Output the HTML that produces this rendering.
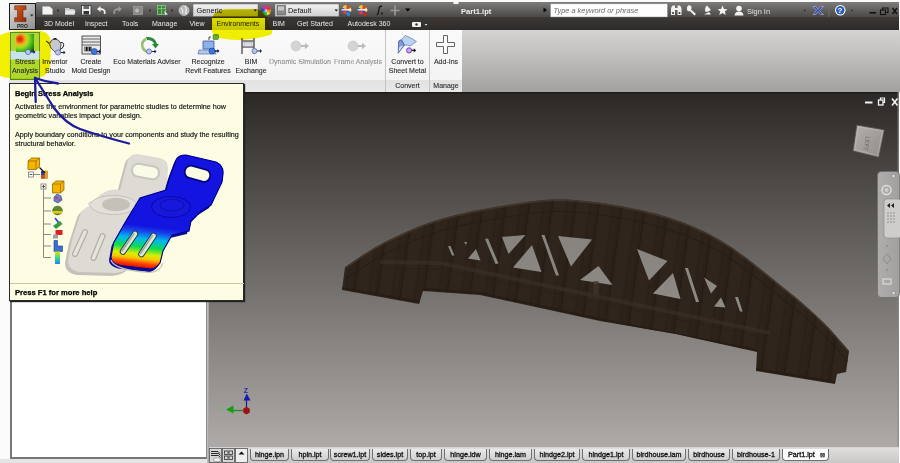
<!DOCTYPE html>
<html><head><meta charset="utf-8">
<style>
*{box-sizing:border-box}
html,body{margin:0;padding:0}
body{width:900px;height:463px;overflow:hidden;position:relative;background:#fbfbfb;font-family:"Liberation Sans",sans-serif}
.a{position:absolute}
.qa{left:36px;top:2px;width:863px;height:16px;background:linear-gradient(#7e7c7a,#62605e 50%,#484644)}
.tabs{left:36px;top:17px;width:863px;height:13px;background:linear-gradient(#3a3735,#2e2b29)}
.tab{position:absolute;top:19px;font-size:7px;color:#e8e8e8;white-space:nowrap;line-height:10px}
.rib{left:9px;top:30px;width:453px;height:62px;background:linear-gradient(#fafafa,#f2f2f2)}
.ribr{left:462px;top:30px;width:438px;height:62px;background:linear-gradient(#d6d4d2,#a3a19f)}
.lbl{position:absolute;font-size:7px;color:#2a2a2a;-webkit-text-stroke:0.1px #2a2a2a;text-align:center;white-space:nowrap;line-height:8.5px}
.vp{left:209px;top:92px;width:690px;height:355px;background:linear-gradient(#2c2826,#3c3836 12%,#adaaa7)}
.br{left:10px;top:100px;width:197px;height:359px;background:#fff;border-left:2px solid #777;border-bottom:2px solid #777;border-right:1px solid #8a8a8a}
.tt{left:9px;top:83px;width:235px;height:218px;background:#fdfde3;border:1px solid #2a2a2a;box-shadow:1px 1px 1px #222}
.ttx{position:absolute;left:5px;font-size:7.2px;color:#111;white-space:nowrap;line-height:9px;-webkit-text-stroke:0.15px #111}
.btab{position:absolute;top:449px;height:12px;background:linear-gradient(#eaeaea,#cfcfcf);border:1px solid #707070;border-top:none;border-radius:0 0 4px 4px;font-size:7.2px;color:#111;text-align:center;line-height:11px;white-space:nowrap;-webkit-text-stroke:0.3px #111}
</style></head><body>
<!-- title/quick access -->
<div class="a qa"></div>
<div class="a tabs"></div>
<!-- app button -->

<div class="tab" style="left:44px">3D Model</div>
<div class="tab" style="left:85px">Inspect</div>
<div class="tab" style="left:122px">Tools</div>
<div class="tab" style="left:152px">Manage</div>
<div class="tab" style="left:189.5px">View</div>
<div class="a" style="left:212px;top:18px;width:53px;height:12px;background:linear-gradient(#e6e6e6,#cfcfcf)"></div>
<div class="tab" style="left:216.5px;color:#222">Environments</div>
<div class="tab" style="left:272.5px">BIM</div>
<div class="tab" style="left:297px">Get Started</div>
<div class="tab" style="left:347.5px">Autodesk 360</div>

<!--TOPBAR-->
<svg class="a" style="left:0;top:0" width="900" height="32" viewBox="0 0 900 32">
<defs>
 <linearGradient id="appg" x1="0" y1="0" x2="1" y2="1"><stop offset="0" stop-color="#e0e0e0"/><stop offset="1" stop-color="#8c8c8c"/></linearGradient><linearGradient id="ig" x1="0" y1="0" x2="1" y2="1"><stop offset="0" stop-color="#e06020"/><stop offset="1" stop-color="#902808"/></linearGradient>
 <linearGradient id="fld" x1="0" y1="0" x2="0" y2="1"><stop offset="0" stop-color="#f4f4f4"/><stop offset="1" stop-color="#cfcfcf"/></linearGradient>
 <radialGradient id="wheel" cx="0.5" cy="0.5" r="0.5"><stop offset="0" stop-color="#fff"/><stop offset="0.6" stop-color="#f0d040"/><stop offset="1" stop-color="#c03020"/></radialGradient>
</defs>
<!-- app button -->
<rect x="9.5" y="3.5" width="26" height="26" fill="url(#appg)" stroke="#1a1a1a" stroke-width="1"/>
<path d="M14.7,5.8 H26 V9.6 H23 V17.8 H26 V21.6 H14.7 V17.8 H17.6 V9.6 H14.7Z" fill="url(#ig)" stroke="#6a2006" stroke-width="0.6"/>
<text x="17" y="28.3" font-family="Liberation Sans" font-weight="bold" font-size="5" fill="#222">PRO</text>
<path d="M30,14.5 H33.5 L31.75,16.5Z" fill="#222"/>
<!-- quick access icons -->
<path d="M42.5,6.5 H49.5 L52.5,9 V14.5 H42.5Z" fill="#f2f2f2" stroke="#bbb" stroke-width="0.5"/>
<circle cx="58" cy="10.5" r="0.9" fill="#222"/>
<path d="M65,8 H69 L70,9 H74.5 V14.5 H65Z" fill="#c8c8c8"/><path d="M66,10.5 H75.5 L74.5,14.5 H65Z" fill="#e8e8e8"/>
<rect x="81.5" y="5.5" width="9.5" height="9.5" fill="#eee" stroke="#333" stroke-width="0.8"/><rect x="83.5" y="6" width="5.5" height="3" fill="#666"/><rect x="83.5" y="11" width="5.5" height="3.5" fill="#333"/>
<path d="M104.5,14 Q106,9 100,9 H98.5" fill="none" stroke="#eee" stroke-width="1.8"/><path d="M97,9 L100.5,6 V12Z" fill="#eee"/>
<path d="M114.5,14 Q113,9 119,9 H120.5" fill="none" stroke="#9a9896" stroke-width="1.8"/><path d="M122,9 L118.5,6 V12Z" fill="#9a9896"/>
<rect x="133.5" y="6.5" width="9" height="8" fill="#8a8886" stroke="#aaa" stroke-width="0.6"/><circle cx="137" cy="10.5" r="2" fill="#bbb"/>
<circle cx="150" cy="10.5" r="0.9" fill="#222"/>
<rect x="157.5" y="5.5" width="8" height="9" fill="#3a8a3a" stroke="#9ad09a" stroke-width="0.7"/><path d="M157.5,8.5 H165.5 M161.5,5.5 V14.5" stroke="#a0d8a0" stroke-width="0.6"/><path d="M164,11 L168,14.5 L165,14.5 L166,16Z" fill="#fff"/>
<circle cx="172" cy="10.5" r="0.9" fill="#222"/>
<circle cx="184" cy="10.5" r="5" fill="#b8b8b8" stroke="#ddd" stroke-width="0.6"/><path d="M181,8 Q184,10 182.5,13 M185,6 Q187,9 186,12 Q184,13 187,14" fill="none" stroke="#fafafa" stroke-width="1"/>
<!-- generic field -->
<rect x="193" y="4" width="65" height="12.5" fill="url(#fld)" stroke="#666" stroke-width="0.5"/>
<text x="196.5" y="13.3" font-family="Liberation Sans" font-size="7.4" fill="#111">Generic</text>
<path d="M253.5,9.5 H257 L255.25,11.5Z" fill="#111"/>
<path d="M266,10.5 L268.50,6.17 A5,5 0 0,1 270.83,9.21Z" fill="#e83030"/><path d="M266,10.5 L270.83,9.21 A5,5 0 0,1 270.33,13.00Z" fill="#f08020"/><path d="M266,10.5 L270.33,13.00 A5,5 0 0,1 267.29,15.33Z" fill="#f0e020"/><path d="M266,10.5 L267.29,15.33 A5,5 0 0,1 263.50,14.83Z" fill="#40c040"/><path d="M266,10.5 L263.50,14.83 A5,5 0 0,1 261.17,11.79Z" fill="#20a0e0"/><path d="M266,10.5 L261.17,11.79 A5,5 0 0,1 261.67,8.00Z" fill="#3040c0"/><path d="M266,10.5 L261.67,8.00 A5,5 0 0,1 264.71,5.67Z" fill="#a040c0"/><path d="M266,10.5 L264.71,5.67 A5,5 0 0,1 268.50,6.17Z" fill="#e03080"/><circle cx="266" cy="10.5" r="1.6" fill="#fff" opacity="0.5"/>
<rect x="275" y="4" width="64" height="12.5" fill="url(#fld)" stroke="#666" stroke-width="0.5"/>
<rect x="277" y="5.5" width="8.5" height="9.5" fill="#8a8a8a" stroke="#444" stroke-width="0.5"/><rect x="278" y="6.5" width="6" height="4" fill="#c8c8c8"/>
<text x="288" y="13.3" font-family="Liberation Sans" font-size="7.4" fill="#111">Default</text>
<path d="M334.5,9.5 H338 L336.25,11.5Z" fill="#111"/>
<path d="M346.5,9.8 L346.50,5.00 A4.8,4.8 0 0,1 350.66,7.40Z" fill="#e04040"/><path d="M346.5,9.8 L350.66,7.40 A4.8,4.8 0 0,1 350.66,12.20Z" fill="#f0d030"/><path d="M346.5,9.8 L350.66,12.20 A4.8,4.8 0 0,1 346.50,14.60Z" fill="#3050d0"/><path d="M346.5,9.8 L346.50,14.60 A4.8,4.8 0 0,1 342.34,12.20Z" fill="#e04040"/><path d="M346.5,9.8 L342.34,12.20 A4.8,4.8 0 0,1 342.34,7.40Z" fill="#3050d0"/><path d="M346.5,9.8 L342.34,7.40 A4.8,4.8 0 0,1 346.50,5.00Z" fill="#f0d030"/><rect x="341.7" y="9" width="9.6" height="1.6" fill="#f4f4f4" opacity="0.85"/><path d="M348,11.5 Q350,13 350,14.5 A1.6,1.6 0 0,1 346.8,14.5 Q346.8,13 348,11.5Z" fill="#2a90e0"/>
<path d="M362.5,9.8 L362.50,5.00 A4.8,4.8 0 0,1 366.66,7.40Z" fill="#e04040"/><path d="M362.5,9.8 L366.66,7.40 A4.8,4.8 0 0,1 366.66,12.20Z" fill="#f0d030"/><path d="M362.5,9.8 L366.66,12.20 A4.8,4.8 0 0,1 362.50,14.60Z" fill="#3050d0"/><path d="M362.5,9.8 L362.50,14.60 A4.8,4.8 0 0,1 358.34,12.20Z" fill="#e04040"/><path d="M362.5,9.8 L358.34,12.20 A4.8,4.8 0 0,1 358.34,7.40Z" fill="#3050d0"/><path d="M362.5,9.8 L358.34,7.40 A4.8,4.8 0 0,1 362.50,5.00Z" fill="#f0d030"/><rect x="357.7" y="9" width="9.6" height="1.6" fill="#f4f4f4" opacity="0.85"/><path d="M364.5,11.5 Q366.5,13 366.5,14.5 A1.6,1.6 0 0,1 363.3,14.5 Q363.3,13 364.5,11.5Z" fill="#e02010"/>
<path d="M377,15 Q379,13 379,9 Q379,6 382,6" fill="none" stroke="#1a1a1a" stroke-width="1.3"/><circle cx="382" cy="13.5" r="1" fill="#1a1a1a"/>
<path d="M395,5.5 V15.5 M390.5,10.5 H399.5" stroke="#9c9a98" stroke-width="1.6"/>
<path d="M405,8.5 H410.5 L407.75,11.5Z" fill="#000"/>
<rect x="453.5" y="0" width="5" height="4" fill="#f8f8f8"/>
<text x="461" y="13.5" font-family="Liberation Sans" font-weight="bold" font-size="7.6" fill="#f0f0f0">Part1.ipt</text>
<path d="M543.5,7.5 L547,10 L543.5,12.5Z" fill="#000"/>
<rect x="550.5" y="3.8" width="117" height="13.2" fill="#fdfdfd" stroke="#888" stroke-width="0.5"/>
<text x="553.5" y="13.3" font-family="Liberation Sans" font-style="italic" font-size="7.4" fill="#6a6a6a">Type a keyword or phrase</text>
<!-- right icons -->
<g fill="#f2f2f2">
 <path d="M671,15 V9 Q671,6 673,5.5 L675,5.5 V15Z M681.5,15 V9 Q681.5,6 679.5,5.5 L677.5,5.5 V15Z"/><rect x="674" y="8" width="4.5" height="2"/>
 <path d="M687,7 L689,5 Q693,6 691,9.5 L696,14 L694.5,15.5 L690,11 Q686.5,12.5 687,7Z"/>
 <path d="M704,14.5 H711 L709,12 Z M705.5,12 Q704,8 707,5.5 L711,10 Q708,12 705.5,12Z"/>
 <path d="M722.5,5.5 L724,9 L727.5,9.2 L724.8,11.5 L725.8,15 L722.5,13 L719.2,15 L720.2,11.5 L717.5,9.2 L721,9Z"/>
 <circle cx="739" cy="8.5" r="2.8"/><circle cx="673" cy="13" r="1.1" fill="#3a3836"/><circle cx="679.5" cy="13" r="1.1" fill="#3a3836"/><path d="M734.5,15.5 Q735,11.5 739,11.5 Q743,11.5 743.5,15.5Z"/>
</g>
<text x="747" y="13.5" font-family="Liberation Sans" font-size="7.4" fill="#e0e0e0">Sign In</text>
<circle cx="804.7" cy="10.5" r="0.8" fill="#222"/>
<path d="M813,6.5 L816,6.5 L818,9.5 L820.5,6.5 L823.5,6.5 L819.5,10.5 L823.5,14.5 L820.5,14.5 L818,11.5 L816,14.5 L813,14.5 L816.5,10.5Z" fill="#3a4ab0" stroke="#c8d0f0" stroke-width="0.5"/>
<rect x="828.5" y="4" width="1" height="13" fill="#6e6c6a"/>
<circle cx="840.3" cy="10.3" r="5.3" fill="#fff"/><circle cx="840.3" cy="10.3" r="4.2" fill="#2e5fb8"/>
<text x="837.6" y="13.4" font-family="Liberation Sans" font-weight="bold" font-size="8" fill="#fff">?</text>
<circle cx="852" cy="10.5" r="0.8" fill="#222"/>
<rect x="869.5" y="12" width="6.5" height="1.6" fill="#111"/>
<rect x="880.5" y="10" width="5" height="4.5" fill="none" stroke="#111" stroke-width="1.1"/><path d="M882.5,10 V8 H888 V12.5 H885.5" fill="none" stroke="#111" stroke-width="1.1"/>
<path d="M892.5,8 L897,14 M897,8 L892.5,14" stroke="#111" stroke-width="1.4"/>
<!-- tab bar camera -->
<rect x="412" y="22" width="9" height="5" rx="1" fill="#eee"/><circle cx="416.5" cy="24.5" r="1.2" fill="#333"/>
<path d="M424.5,24 H427.5 L426,25.8Z" fill="#ddd"/>
</svg>
<!--/TOPBAR-->

<!-- ribbon -->
<div class="a rib"></div>
<div class="a ribr"></div>
<div class="a" style="left:9px;top:80px;width:453px;height:12px;background:linear-gradient(#e2e2e2,#e8e8e8)"></div>
<div class="a" style="left:385px;top:30px;width:1px;height:62px;background:#c4c4c4"></div>
<div class="a" style="left:429px;top:30px;width:1px;height:62px;background:#c4c4c4"></div>
<div class="lbl" style="left:386px;top:82px;width:43px">Convert</div>
<div class="lbl" style="left:430px;top:82px;width:32px">Manage</div>

<div class="a" style="left:10px;top:32px;width:29.5px;height:47.5px;background:#b0d82c;border:1px solid #5a8a30"></div>
<!--RIBICONS-->
<svg class="a" style="left:0;top:0" width="470" height="60" viewBox="0 0 470 60">
<defs>
 <radialGradient id="heat" cx="0.22" cy="0.28" r="1"><stop offset="0" stop-color="#d81808"/><stop offset="0.14" stop-color="#f04810"/><stop offset="0.3" stop-color="#f0b020"/><stop offset="0.45" stop-color="#b0dc20"/><stop offset="0.65" stop-color="#50c020"/><stop offset="0.85" stop-color="#208a18"/><stop offset="1" stop-color="#105010"/></radialGradient>
 <g id="arr"><circle cx="0" cy="0" r="2.6" fill="#b8c4e8" stroke="#5060a0" stroke-width="0.7"/><path d="M2.6,-0.6 H5.5 V-2 L7.5,0 L5.5,2 V0.6 H2.6Z" fill="#1a2050"/></g>
</defs>
<!-- stress -->
<rect x="10.5" y="51" width="29" height="8.5" fill="#c8e2f0"/>
<path d="M19,34 H34 V52 H16 V37Z" fill="url(#heat)"/>
<use href="#arr" x="28" y="52"/>
<!-- inventor studio teapot -->
<path d="M46,41 Q50,44 51,48 L55,52 H60 L61,44 Q59,39 55,39 Q51,39 50,43Z" fill="#c8c8d4" stroke="#333" stroke-width="0.8"/>
<path d="M60.5,42.5 Q64.5,42 63.5,46 Q62.5,49 60.5,49" fill="none" stroke="#222" stroke-width="1"/>
<rect x="53.5" y="38" width="3" height="1.6" fill="#222"/>
<use href="#arr" x="58" y="52.5"/>
<!-- mold -->
<rect x="82" y="36" width="18.5" height="18" fill="#e8e8e8" stroke="#444" stroke-width="0.9"/>
<path d="M82,39 H100.5 M82,42 H100.5 M82,45 H100.5" stroke="#555" stroke-width="0.9"/>
<rect x="84" y="46.5" width="8" height="5" fill="#888"/><rect x="86" y="47" width="1.5" height="4" fill="#111"/><rect x="89" y="47" width="1.5" height="4" fill="#111"/>
<circle cx="94.2" cy="51.5" r="3" fill="#3a78e0" stroke="#1a3a90" stroke-width="0.6"/><path d="M97,50.8 H99 V49.5 L101,51.5 L99,53.5 V52.2 H97Z" fill="#1a2050"/>
<!-- eco -->
<path d="M146,37 Q155,36 157,44 L159,44 L155.5,48.5 L152,44 L154,44 Q153,40 147,40Z" fill="#2a8a3a"/>
<path d="M141,46 Q140,40 146,37.5 L146.5,40.5 Q143,42 143.5,46 Q145,50 149,51 L149,53.5 Q142,53 141,46Z" fill="#98c070"/>
<use href="#arr" x="149" y="51.5"/>
<!-- revit -->
<rect x="213" y="34.5" width="5.5" height="5" rx="1" fill="#60b030" stroke="#2a6a10" stroke-width="0.5"/>
<path d="M211,37 H209 V40" fill="none" stroke="#222" stroke-width="0.8"/>
<path d="M203,41 H214 L214,49 H203Z" fill="#90b0e8" stroke="#3a5aa0" stroke-width="0.8"/>
<path d="M199,50 H215 L216,54 H198Z" fill="#b8c8e8" stroke="#3a5aa0" stroke-width="0.6"/>
<circle cx="212" cy="51" r="3" fill="#3a78e0" stroke="#1a3a90" stroke-width="0.6"/><path d="M215,50.3 H217.5 V49 L219.5,51 L217.5,53 V51.7 H215Z" fill="#1a2050"/>
<!-- BIM -->
<path d="M242,38 V54 M254,38 V54 M242,41 H254 M242,47 H254" stroke="#666" stroke-width="1.6" fill="none"/>
<rect x="244" y="42" width="8" height="4.5" fill="#dde" stroke="#888" stroke-width="0.5"/>
<use href="#arr" x="254.5" y="51"/>
<!-- disabled -->
<circle cx="296" cy="46" r="5" fill="#d4d4d4" stroke="#c4c4c4" stroke-width="0.6"/><path d="M301,45 H305 V42.8 L309,46 L305,49.2 V47 H301Z" fill="#bcbcbc"/>
<circle cx="353" cy="46" r="5" fill="#d4d4d4" stroke="#c4c4c4" stroke-width="0.6"/><path d="M358,45 H362 V42.8 L366,46 L362,49.2 V47 H358Z" fill="#bcbcbc"/>
<!-- convert sheet metal -->
<path d="M401.3,39.8 L405.2,35.4 Q410,37 416.4,41.6 L410.1,46 Q407,44.5 404.4,45.2Z" fill="#bcd2f2" stroke="#5a78b8" stroke-width="0.7"/>
<path d="M398.7,41 L401.3,39.8 L404.4,45.2 L398.2,53.2Z" fill="#7e9cdc" stroke="#3a4a80" stroke-width="0.7"/>
<path d="M399.5,47 L403,45.5 L398.5,52Z" fill="#dfe8f8"/>
<circle cx="409.1" cy="50.4" r="2.6" fill="#c8a8f0" stroke="#6a3aa0" stroke-width="0.9"/><path d="M411.7,49.7 H413.8 V48.2 L416.2,50.4 L413.8,52.6 V51.1 H411.7Z" fill="#1a1030"/>
<!-- add-ins -->
<path d="M443.5,35.5 H447.5 V42.5 H454.5 V46.5 H447.5 V53.5 H443.5 V46.5 H436.5 V42.5 H443.5Z" fill="#fafafa" stroke="#555" stroke-width="0.9"/>
</svg>
<!--/RIBICONS-->

<div class="lbl" style="left:5px;top:58px;width:40px">Stress<br>Analysis</div>
<div class="lbl" style="left:35px;top:58px;width:40px">Inventor<br>Studio</div>
<div class="lbl" style="left:66px;top:58px;width:50px">Create<br>Mold Design</div>
<div class="lbl" style="left:112px;top:58px;width:70px">Eco Materials Adviser</div>
<div class="lbl" style="left:180px;top:58px;width:56px">Recognize<br>Revit Features</div>
<div class="lbl" style="left:231px;top:58px;width:40px">BIM<br>Exchange</div>
<div class="lbl" style="left:268px;top:58px;width:64px;color:#b4b4b4">Dynamic Simulation</div>
<div class="lbl" style="left:332px;top:58px;width:52px;color:#b4b4b4">Frame Analysis</div>
<div class="lbl" style="left:386px;top:58px;width:43px">Convert to<br>Sheet Metal</div>
<div class="lbl" style="left:430px;top:58px;width:32px">Add-Ins</div>

<!-- viewport -->
<div class="a vp"></div>
<!--BRIDGE-->
<svg class="a" style="left:0;top:0" width="900" height="463" viewBox="0 0 900 463">
<defs>
 <linearGradient id="vpg" gradientUnits="userSpaceOnUse" x1="0" y1="92" x2="0" y2="447">
  <stop offset="0" stop-color="#2c2826"/><stop offset="0.12" stop-color="#3c3836"/><stop offset="1" stop-color="#adaaa7"/>
 </linearGradient>
 <linearGradient id="holeg" gradientUnits="userSpaceOnUse" x1="0" y1="230" x2="0" y2="315">
  <stop offset="0" stop-color="#86827e"/><stop offset="1" stop-color="#8f8b87"/>
 </linearGradient>
 <pattern id="planks" patternUnits="userSpaceOnUse" width="23" height="400" patternTransform="rotate(8)">
  <rect width="30" height="400" fill="#2d231a"/>
  <rect x="0" width="1" height="400" fill="#221a13"/>
  <rect x="3" width="10" height="400" fill="#30251c"/>
  <rect x="15" width="0.8" height="400" fill="#261d15"/>
  <rect x="20" width="8" height="400" fill="#2b2118"/>
 </pattern>
</defs>
<path d="M345.0,267.0 350.0,263.7 356.9,258.9 365.2,253.4 374.4,247.8 384.0,242.5 394.1,237.5 404.9,232.5 416.4,227.5 428.8,222.7 442.0,218.5 456.7,214.7 472.9,211.1 489.5,207.9 505.6,205.2 520.0,203.0 532.1,201.3 542.5,200.1 552.3,199.4 562.8,199.3 575.0,200.0 589.6,201.4 605.9,203.6 622.9,206.4 639.6,209.7 655.0,213.5 669.0,217.6 682.1,222.1 694.8,227.2 707.3,233.1 720.0,240.0 733.3,248.4 746.9,258.3 760.2,268.8 772.8,279.0 784.0,288.0 793.6,295.8 802.0,302.8 809.5,309.4 816.4,315.7 823.0,322.0 829.4,328.6 835.6,335.4 841.1,341.7 845.7,347.1 849.0,351.0 846.0,372.0 837.0,374.0 835.0,384.0 756.0,371.0 757.0,352.0 676.0,334.0 600.0,321.0 480.0,295.0 423.0,291.0 419.0,304.0 342.0,290.0Z" fill="url(#planks)"/>
<clipPath id="bclip"><path d="M345.0,267.0 350.0,263.7 356.9,258.9 365.2,253.4 374.4,247.8 384.0,242.5 394.1,237.5 404.9,232.5 416.4,227.5 428.8,222.7 442.0,218.5 456.7,214.7 472.9,211.1 489.5,207.9 505.6,205.2 520.0,203.0 532.1,201.3 542.5,200.1 552.3,199.4 562.8,199.3 575.0,200.0 589.6,201.4 605.9,203.6 622.9,206.4 639.6,209.7 655.0,213.5 669.0,217.6 682.1,222.1 694.8,227.2 707.3,233.1 720.0,240.0 733.3,248.4 746.9,258.3 760.2,268.8 772.8,279.0 784.0,288.0 793.6,295.8 802.0,302.8 809.5,309.4 816.4,315.7 823.0,322.0 829.4,328.6 835.6,335.4 841.1,341.7 845.7,347.1 849.0,351.0 846.0,372.0 837.0,374.0 835.0,384.0 756.0,371.0 757.0,352.0 676.0,334.0 600.0,321.0 480.0,295.0 423.0,291.0 419.0,304.0 342.0,290.0Z"/></clipPath>
<g clip-path="url(#bclip)">
<path d="M345.0,267.5 350.0,264.2 356.9,259.4 365.2,253.9 374.4,248.3 384.0,243.0 394.1,238.0 404.9,233.0 416.4,228.0 428.8,223.2 442.0,219.0 456.7,215.2 472.9,211.6 489.5,208.4 505.6,205.7 520.0,203.5 532.1,201.8 542.5,200.6 552.3,199.9 562.8,199.8 575.0,200.5 589.6,201.9 605.9,204.1 622.9,206.9 639.6,210.2 655.0,214.0 669.0,218.1 682.1,222.6 694.8,227.7 707.3,233.6 720.0,240.5 733.3,248.9 746.9,258.8 760.2,269.3 772.8,279.5 784.0,288.5 793.6,296.3 802.0,303.3 809.5,309.9 816.4,316.2 823.0,322.5 829.4,329.1 835.6,335.9 841.1,342.2 845.7,347.6 849.0,351.5" fill="none" stroke="#4a3c30" stroke-width="2.5" opacity="0.7"/>
<path d="M345.0,279.0 350.0,275.7 356.9,270.9 365.2,265.4 374.4,259.8 384.0,254.5 394.1,249.5 404.9,244.5 416.4,239.5 428.8,234.7 442.0,230.5 456.7,226.7 472.9,223.1 489.5,219.9 505.6,217.2 520.0,215.0 532.1,213.3 542.5,212.1 552.3,211.4 562.8,211.3 575.0,212.0 589.6,213.4 605.9,215.6 622.9,218.4 639.6,221.7 655.0,225.5 669.0,229.6 682.1,234.1 694.8,239.2 707.3,245.1 720.0,252.0 733.3,260.4 746.9,270.3 760.2,280.8 772.8,291.0 784.0,300.0 793.6,307.8 802.0,314.8 809.5,321.4 816.4,327.7 823.0,334.0 829.4,340.6 835.6,347.4 841.1,353.7 845.7,359.1 849.0,363.0" fill="none" stroke="#261e16" stroke-width="1.2" opacity="0.8"/>
<path d="M746.9,258.3 L771.1,226.4" stroke="#211912" stroke-width="1" opacity="0.8"/><path d="M772.8,279.0 L797.9,247.9" stroke="#211912" stroke-width="1" opacity="0.8"/><path d="M793.6,295.8 L819.0,264.9" stroke="#211912" stroke-width="1" opacity="0.8"/><path d="M809.5,309.4 L836.2,279.6" stroke="#211912" stroke-width="1" opacity="0.8"/><path d="M823.0,322.0 L851.2,293.6" stroke="#211912" stroke-width="1" opacity="0.8"/><path d="M835.6,335.4 L865.4,308.8" stroke="#211912" stroke-width="1" opacity="0.8"/><path d="M845.7,347.1 L876.2,321.2" stroke="#211912" stroke-width="1" opacity="0.8"/>
<path d="M380,262 L440,263 L600,297 L770,333" fill="none" stroke="#3c3127" stroke-width="4" opacity="0.6"/>
<path d="M380,268 L440,269 L600,303 L770,339" fill="none" stroke="#281f17" stroke-width="1" opacity="0.6"/>
<path d="M342,288 L420,302 M423,289 L480,293 L600,319 L757,350 M756,369 L835,382" fill="none" stroke="#251c14" stroke-width="2" opacity="0.8"/>
</g>
<polygon points="448,246 450.5,246 454.5,255.5 452,255.5" fill="url(#holeg)"/>
<polygon points="468,258.5 476,249 480.5,260.5" fill="url(#holeg)"/>
<polygon points="485,239 488,238.5 498.5,263.5 495.5,264" fill="url(#holeg)"/>
<polygon points="502,237 525.5,235 508.5,254" fill="url(#holeg)"/>
<polygon points="513,267.5 532,245 541.5,272" fill="url(#holeg)"/>
<polygon points="541.5,235 544.5,235 559,275.5 556,275.5" fill="url(#holeg)"/>
<polygon points="558,236 592,239.5 571,266.5" fill="url(#holeg)"/>
<polygon points="580,280 598.5,266 612.5,285" fill="url(#holeg)"/>
<polygon points="637,249 667.5,261 649,280.5" fill="url(#holeg)"/>
<polygon points="653,293.5 673,273 680.5,299" fill="url(#holeg)"/>
<polygon points="685,268 688,268 699,302 696,302" fill="url(#holeg)"/>
<polygon points="704,277.5 717,286 711,293.5" fill="url(#holeg)"/>
<polygon points="714,306.5 721,297.5 725.5,307.5" fill="url(#holeg)"/>
<polygon points="735,297 738,297 742.5,311.5 740,311.5" fill="url(#holeg)"/>
<polygon points="464,242 467,242 466,245" fill="url(#holeg)"/>
<rect x="593.5" y="281.5" width="5" height="13" fill="#3c3026"/><rect x="593.5" y="281.5" width="5" height="2" fill="#4e4034"/>
</svg>
<!--/BRIDGE-->
<!--VPDECO-->
<svg class="a" style="left:0;top:0" width="900" height="463" viewBox="0 0 900 463">
<defs>
 <linearGradient id="cubeg" x1="0" y1="0" x2="1" y2="1"><stop offset="0" stop-color="#b4b1ae"/><stop offset="1" stop-color="#8e8b88"/></linearGradient>
 <linearGradient id="navg" x1="0" y1="0" x2="1" y2="0"><stop offset="0" stop-color="#b0aeac"/><stop offset="1" stop-color="#a2a09e"/></linearGradient>
</defs>
<rect x="209" y="92" width="690" height="1.5" fill="#1e1b19"/>
<rect x="897.5" y="92" width="1.5" height="355" fill="#8c8a88" opacity="0.7"/>
<!-- window controls -->
<rect x="865" y="101.5" width="7.5" height="2" fill="#f4f4f4"/>
<rect x="878.5" y="100" width="4.5" height="5" fill="none" stroke="#f4f4f4" stroke-width="1.3"/><path d="M880.5,100 V98 H884.5 V102.5 H883" fill="none" stroke="#f4f4f4" stroke-width="1.2"/>
<path d="M892,98.5 L897.5,105.5 M897.5,98.5 L892,105.5" stroke="#f4f4f4" stroke-width="1.6"/>
<!-- viewcube -->
<circle cx="868.5" cy="141" r="19" fill="none" stroke="#2a2725" stroke-width="1" opacity="0.15"/>
<polygon points="856.8,125 884.4,129.8 878.9,157.4 852.9,151" fill="url(#cubeg)" stroke="#4a4745" stroke-width="0.8"/>
<polygon points="858.5,127 882.5,131 877.5,155.5 854.8,149.5" fill="none" stroke="#c8c5c2" stroke-width="0.6" opacity="0.7"/>
<text x="0" y="0" transform="translate(866,136) rotate(100)" font-family="Liberation Sans" font-size="6" fill="#6a6764">LEFT</text>
<!-- nav bar -->
<rect x="877.5" y="171.5" width="22" height="126" rx="4" fill="url(#navg)" stroke="#6e6c6a" stroke-width="0.8"/>
<circle cx="893.5" cy="176" r="1.6" fill="#e8e8e8" stroke="#777" stroke-width="0.5"/>
<circle cx="893.5" cy="293" r="1.6" fill="#e8e8e8" stroke="#777" stroke-width="0.5"/>
<circle cx="886.5" cy="190" r="4.5" fill="none" stroke="#e0dedc" stroke-width="1.5"/><circle cx="886.5" cy="190" r="2" fill="#d0cecc"/>
<rect x="884" y="199" width="17" height="39" rx="3" fill="#cfcdcb" stroke="#8a8886" stroke-width="0.6"/>
<path d="M887,205.5 L890,203 V208Z M891,205.5 L894,203 V208Z" fill="#222"/>
<g fill="#8a8886"><circle cx="888" cy="213" r="0.8"/><circle cx="891" cy="213" r="0.8"/><circle cx="894" cy="213" r="0.8"/><circle cx="888" cy="216" r="0.8"/><circle cx="891" cy="216" r="0.8"/><circle cx="894" cy="216" r="0.8"/><circle cx="888" cy="219" r="0.8"/><circle cx="891" cy="219" r="0.8"/><circle cx="894" cy="219" r="0.8"/><circle cx="888" cy="222" r="0.8"/><circle cx="891" cy="222" r="0.8"/><circle cx="894" cy="222" r="0.8"/></g>
<circle cx="887" cy="246" r="0.8" fill="#7a7876"/>
<path d="M887,254 L891,259 L887,264 L883,259Z" fill="none" stroke="#8e8c8a" stroke-width="1"/>
<circle cx="887" cy="270" r="0.8" fill="#7a7876"/>
<rect x="883" y="279" width="8" height="5" fill="none" stroke="#e6e4e2" stroke-width="1"/>
<!-- triad -->
<path d="M246.5,410 V399" stroke="#1a1a9a" stroke-width="1.2"/>
<path d="M243.5,400.5 L246.8,393.5 L250.5,400.5Z" fill="#1818b0"/>
<text x="243.8" y="392.5" font-family="Liberation Sans" font-size="7" font-weight="bold" fill="#2828c0">Z</text>
<path d="M243,410.5 H233" stroke="#1a8a1a" stroke-width="1.2"/>
<path d="M233.5,405.5 L226,409.5 L233.5,413.5Z" fill="#10a010"/>
<circle cx="221.5" cy="408.5" r="2.5" fill="#60c060" opacity="0.25"/>
<polygon points="246.5,406.8 249.8,408.8 249.8,412.6 246.5,414.5 243.2,412.6 243.2,408.8" fill="#a01010"/>
</svg>
<!--/VPDECO-->

<!-- browser -->
<div class="a br"></div>
<div class="a" style="left:0;top:459px;width:209px;height:4px;background:#e4e4e4"></div>
<div class="a" style="left:207px;top:100px;width:2px;height:363px;background:linear-gradient(90deg,#c8c8c8,#9a9a9a)"></div>

<!-- bottom tab bar -->
<!--BTABS-->
<div class="a" style="left:209px;top:447px;width:690px;height:16px;background:linear-gradient(#e2e0de,#cac8c6)"></div>
<div class="a" style="left:209px;top:446.5px;width:690px;height:1px;background:#d8d6d4"></div>
<svg class="a" style="left:209px;top:448px" width="40" height="15" viewBox="0 0 40 15">
 <rect x="0.5" y="0.5" width="12" height="14" fill="#d8d6d4" stroke="#555" stroke-width="0.8"/>
 <path d="M2,3.5 H9 L11,5.5 M2,5.5 H9.5 L11.5,7.5 M2,7.5 H9.5 L11.5,9.5" fill="none" stroke="#2a2a2a" stroke-width="1"/><rect x="5" y="10" width="6" height="3.5" fill="#f8f8f8" stroke="#777" stroke-width="0.5"/>
 <rect x="13.5" y="0.5" width="12" height="14" fill="#d8d6d4" stroke="#555" stroke-width="0.8"/>
 <rect x="15.5" y="3" width="3.5" height="3.5" fill="none" stroke="#333" stroke-width="0.8"/><rect x="20" y="3" width="3.5" height="3.5" fill="none" stroke="#333" stroke-width="0.8"/><rect x="15.5" y="8" width="3.5" height="3.5" fill="none" stroke="#333" stroke-width="0.8"/><rect x="20" y="8" width="3.5" height="3.5" fill="none" stroke="#333" stroke-width="0.8"/>
 <rect x="26.5" y="0.5" width="12" height="14" fill="#eeeeee" stroke="#555" stroke-width="0.8"/>
 <path d="M29.5,6.5 L32.5,3.5 L35.5,6.5Z" fill="#111"/>
</svg>
<div class="btab" style="left:250px;width:39px">hinge.ipn</div>
<div class="btab" style="left:291px;width:38px">hpin.ipt</div>
<div class="btab" style="left:330px;width:40px">screw1.ipt</div>
<div class="btab" style="left:372px;width:36px">sides.ipt</div>
<div class="btab" style="left:410px;width:32px">top.ipt</div>
<div class="btab" style="left:444px;width:43px">hinge.idw</div>
<div class="btab" style="left:489px;width:43px">hinge.iam</div>
<div class="btab" style="left:534px;width:46px">hindge2.ipt</div>
<div class="btab" style="left:582px;width:48px">hindge1.ipt</div>
<div class="btab" style="left:632px;width:54px">birdhouse.iam</div>
<div class="btab" style="left:688px;width:42px">birdhouse</div>
<div class="btab" style="left:732px;width:48px">birdhouse-1</div>
<div class="btab" style="left:782px;width:47px;background:#fdfdfd;text-align:left;padding-left:5px">Part1.ipt <span style="font-size:6px;color:#777;margin-left:3px">&#8864;</span></div>
<!--/BTABS-->


<!-- tooltip -->
<div class="a tt">
  <div class="ttx" style="top:5px;font-weight:bold;font-size:7.5px;color:#000;-webkit-text-stroke:0.25px #000">Begin Stress Analysis</div>
  <div class="ttx" style="top:18px">Activates the environment for parametric studies to determine how<br>geometric variables impact your design.</div>
  <div class="ttx" style="top:46px">Apply boundary conditions to your components and study the resulting<br>structural behavior.</div>
  <div class="a" style="left:0px;top:199px;width:234px;height:1px;background:#c4c4a8"></div>
  <div class="ttx" style="top:203.5px;font-weight:bold;font-size:7.6px;color:#000;-webkit-text-stroke:0.25px #000">Press F1 for more help</div>
</div>

<!--TTIMG-->
<svg class="a" style="left:0;top:0" width="900" height="463" viewBox="0 0 900 463">
<defs>
 <linearGradient id="rainb" gradientUnits="userSpaceOnUse" x1="146" y1="226" x2="141" y2="269">
  <stop offset="0" stop-color="#1414e0"/><stop offset="0.12" stop-color="#1840e8"/><stop offset="0.3" stop-color="#00b8f0"/><stop offset="0.5" stop-color="#10dc50"/><stop offset="0.66" stop-color="#d8f000"/><stop offset="0.76" stop-color="#f8c800"/><stop offset="0.88" stop-color="#ff4000"/><stop offset="1" stop-color="#d00000"/>
 </linearGradient>
 <clipPath id="lowtab"><polygon points="100,222 190,222 170,280 100,280"/></clipPath>
</defs>
<!-- gray piece thickness -->
<path transform="translate(-3,3)" d="M128,160 Q130,154 137,154 L160,158 Q168,160 168,168 L167,186 L175,200 L150,240 L135,262 Q128,272 115,273 L80,272 Q68,270 68,260 L72,240 L80,215 Q82,208 92,205 L100,195 Q110,188 120,190 L124,175 Z" fill="#c4c2ba"/>
<path d="M128,160 Q130,154 137,154 L160,158 Q168,160 168,168 L167,186 L175,200 L150,240 L135,262 Q128,272 115,273 L80,272 Q68,270 68,260 L72,240 L80,215 Q82,208 92,205 L100,195 Q110,188 120,190 L124,175 Z" fill="#dddbd3"/>
<rect x="132" y="165" width="27" height="13" rx="6" transform="rotate(10 145.5 171.5)" fill="#fafae8" stroke="#c8c6be" stroke-width="2"/>
<ellipse cx="113.5" cy="205" rx="23" ry="9.5" fill="#e2e0d8" stroke="#c4c2ba" stroke-width="1"/><path d="M91,201 L88.5,204 L91,207" fill="#e2e0d8" stroke="#c4c2ba" stroke-width="0.8"/><ellipse cx="116" cy="204.5" rx="14" ry="6.8" fill="#c4c2b8"/>
<path d="M85,232 L75,254" stroke="#b2b0a8" stroke-width="6" stroke-linecap="round"/><path d="M85,232 L75,254" stroke="#e6e4da" stroke-width="3.4" stroke-linecap="round"/>
<path d="M102.5,236 L93.5,258" stroke="#b2b0a8" stroke-width="6" stroke-linecap="round"/><path d="M102.5,236 L93.5,258" stroke="#e6e4da" stroke-width="3.4" stroke-linecap="round"/>
<!-- blue piece -->
<path transform="translate(-2,3)" d="M176,160 Q178,155 186,155 L216,162 Q224,166 223,174 L222,182 L211,205 L200,212 L191,221 L189,231 L172,235 L163,251 L160,263 Q156,269 150,269 L120,265.5 Q111,263 111,257 L113.5,243 L126,221 L140,198 L166,190 L170,176 Z" fill="#0c0c9a"/>
<path d="M176,160 Q178,155 186,155 L216,162 Q224,166 223,174 L222,182 L211,205 L200,212 L191,221 L189,231 L172,235 L163,251 L160,263 Q156,269 150,269 L120,265.5 Q111,263 111,257 L113.5,243 L126,221 L140,198 L166,190 L170,176 Z" fill="#1414e0"/>
<path d="M176,160 Q178,155 186,155 L216,162 Q224,166 223,174 L222,182 L211,205 L200,212 L191,221 L189,231 L172,235 L163,251 L160,263 Q156,269 150,269 L120,265.5 Q111,263 111,257 L113.5,243 L126,221 L140,198 L166,190 L170,176 Z" fill="url(#rainb)" stroke="#000088" stroke-width="1.1"/>
<path d="M111,260 Q114,270 150,272.5 Q160,272 163,263" fill="none" stroke="#c8c6b0" stroke-width="1.2"/>
<rect x="184.5" y="167.5" width="26" height="12.5" rx="6" transform="rotate(15 197.5 173.7)" fill="#fbfbe4" stroke="#06067a" stroke-width="1.8"/>
<ellipse cx="171" cy="207" rx="19.5" ry="10.5" fill="#1818dc" stroke="#0808a0" stroke-width="1"/><ellipse cx="172" cy="205" rx="12" ry="6" fill="none" stroke="#0a0aa8" stroke-width="0.8"/>
<path d="M135,234 L123,251.5" stroke="#203848" stroke-width="6.5" stroke-linecap="round"/><path d="M135,234 L123,251.5" stroke="#dfe8d8" stroke-width="4.6" stroke-linecap="round"/><path d="M134,233.5 L122,251" stroke="#9aa8a0" stroke-width="1.5" stroke-linecap="round"/>
<path d="M153.5,236 L141.5,254" stroke="#203848" stroke-width="6.5" stroke-linecap="round"/><path d="M153.5,236 L141.5,254" stroke="#dfe8d8" stroke-width="4.6" stroke-linecap="round"/><path d="M152.5,235.5 L140.5,253.5" stroke="#9aa8a0" stroke-width="1.5" stroke-linecap="round"/>
<!-- tree -->
<g stroke="#8a8a80" stroke-width="1" fill="none">
 <path d="M33,174.5 H40"/>
 <path d="M43.5,189 V257.5"/>
 <path d="M43.5,198 H51 M43.5,211 H51 M43.5,224 H51 M43.5,234.5 H51 M43.5,246 H51 M43.5,257.5 H51"/>
</g>
<path d="M28,161 L31.5,158 L39.5,158 L39.5,166.5 L36,169.5 L28,169.5Z" fill="#f4b400" stroke="#8a5a00" stroke-width="0.7"/>
<path d="M28,161 L36,161 L39.5,158 M36,161 V169.5" fill="none" stroke="#8a5a00" stroke-width="0.6"/>
<rect x="28.5" y="172" width="5" height="5" fill="#fff" stroke="#777" stroke-width="0.8"/>
<path d="M29.5,174.5 H32.5" stroke="#333" stroke-width="0.8"/>
<rect x="41" y="184" width="5" height="5" fill="#fff" stroke="#777" stroke-width="0.8"/>
<path d="M42,186.5 H45 M43.5,185 V188" stroke="#333" stroke-width="0.8"/>
<rect x="41" y="171" width="6.5" height="7.5" fill="#2040c0"/>
<rect x="44.5" y="170.5" width="3" height="8" fill="#f0a000"/>
<rect x="41" y="175" width="3.5" height="3.5" fill="#e04020"/>
<path d="M39.5,167.5 L45,173" stroke="#111" stroke-width="1.3"/>
<path d="M52.5,184 L56,181 L64,181 L64,190 L60.5,193 L52.5,193Z" fill="#f4b400" stroke="#8a5a00" stroke-width="0.7"/>
<path d="M52.5,184 L60.5,184 L64,181 M60.5,184 V193" fill="none" stroke="#8a5a00" stroke-width="0.6"/>
<path d="M54,197 L57,194 L61,196 L62,200 L58,203 L54,201Z" fill="#6a80d0" stroke="#2a3a90" stroke-width="0.6"/><circle cx="56.5" cy="198" r="1.3" fill="#d04040"/><circle cx="60" cy="200" r="1.1" fill="#d04040"/>
<ellipse cx="57.5" cy="210.5" rx="4.8" ry="4.3" fill="#5a8a30" stroke="#2a4a10" stroke-width="0.6"/><rect x="53" y="211" width="9" height="2.5" fill="#e8c800"/>
<path d="M53,226 L60,221 L62.5,224 L56,229Z" fill="#3a9a40"/><path d="M55,218 L58.5,222.5" stroke="#2040d0" stroke-width="1.6"/>
<rect x="55.5" y="230" width="7" height="5" fill="#e02020"/><rect x="53" y="234.5" width="5" height="4" fill="#a0a0a0"/>
<path d="M54,240.5 H57.5 V246 H62.5 V251.5 H54Z" fill="#3a70d0" stroke="#1a3a90" stroke-width="0.6"/>
<rect x="55" y="251.5" width="5" height="12.5" fill="url(#rainb2)"/>
<defs><linearGradient id="rainb2" x1="0" y1="0" x2="0" y2="1"><stop offset="0" stop-color="#f0e000"/><stop offset="0.45" stop-color="#40e080"/><stop offset="1" stop-color="#2080ff"/></linearGradient></defs>
</svg>
<!--/TTIMG-->
<!--OVERLAY-->
<svg class="a" style="left:0;top:0;mix-blend-mode:multiply" width="900" height="463" viewBox="0 0 900 463">
 <path fill-rule="evenodd" d="M-6,40 Q2,31 20,31 L40,31 Q51,32 51,45 L50,66 Q48,77 36,78 L12,78 Q-2,78 -6,70Z M10,32 H39.5 V79.5 H10Z" fill="#f6f400"/>
 <path d="M212,20 Q213,10 226,9.5 L256,9.3 Q264,10.5 266.5,17 L270,28 Q275,32 270,35 Q258,39 240,40 Q222,40 215,36 Q211,32 211,25Z" fill="#f6f400"/>
 <clipPath id="topclip"><rect x="0" y="0" width="900" height="17.5"/></clipPath><path clip-path="url(#topclip)" d="M212,20 Q213,10 226,9.5 L256,9.3 Q264,10.5 266.5,17 L270,28 Q275,32 270,35 Q258,39 240,40 Q222,40 215,36 Q211,32 211,25Z" fill="#ccc800"/>
</svg>
<svg class="a" style="left:0;top:0" width="900" height="463" viewBox="0 0 900 463">
 <g fill="none" stroke="#1c1ca0" stroke-width="2.3" stroke-linecap="round">
  <path d="M35,78 L35.7,102"/>
  <path d="M35,78 Q46,82 58,83.5"/>
  <path d="M35,78 Q44,92 54,108 Q66,124 80,129 Q100,136 129,143.5"/>
 </g>
</svg>
<!--/OVERLAY-->

</body></html>
